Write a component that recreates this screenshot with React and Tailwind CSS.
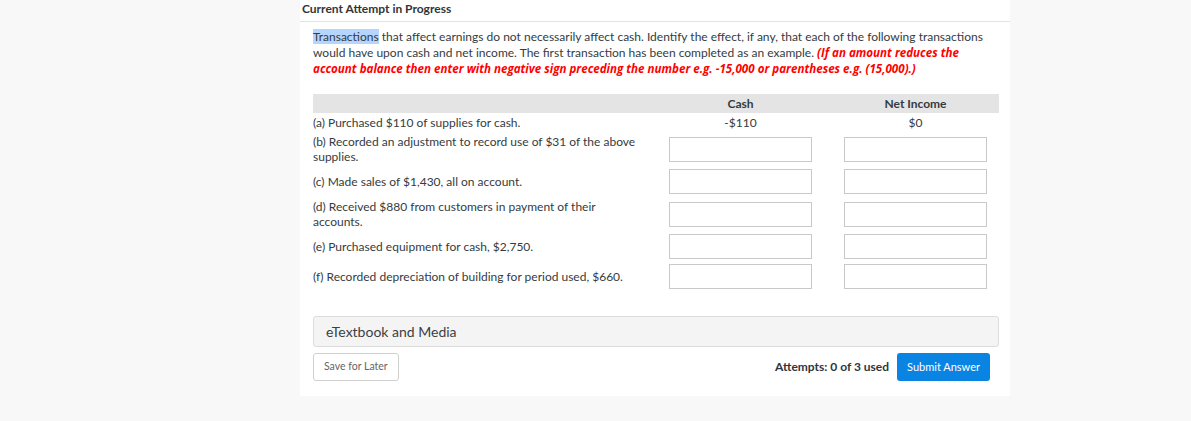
import React from "react"

const rows = [
    { label: "(b) Recorded an adjustment to record use of $31 of the above supplies." },
    { label: "(c) Made sales of $1,430, all on account." },
    { label: "(d) Received $880 from customers in payment of their accounts." },
    { label: "(e) Purchased equipment for cash, $2,750." },
    { label: "(f) Recorded depreciation of building for period used, $660." },
]

function AnswerInput() {
    return <input type="text" className="block w-[143px] h-[25px] border border-[#c9c9c9] bg-white outline-none" />
}

export default function App() {
    return (
        <div className="min-h-[421px] w-full bg-[#f8f8f8] font-['Lato','Liberation_Sans',sans-serif] text-[#353b41]">
            <div className="ml-[300px] w-[710px] bg-white pb-[15px]">
                <div className="h-[22px] border-b border-[#e3e3e3] pl-[2px] pt-[1px] text-[12px] font-bold leading-[16px] text-[#2f353b]">
                    Current Attempt in Progress
                </div>
                <div className="px-[13px]">
                    <p className="mt-[7px] w-[670px] text-[12px] leading-[16px]">
                        <span className="bg-[#b4d5fd]">Transactions</span> that affect earnings do not necessarily affect cash. Identify the effect, if any, that each of the following transactions would have upon cash and net income. The first transaction has been completed as an example.{" "}
                        <span className="font-['Open_Sans',sans-serif] text-[11.6px] font-bold italic text-[#ff0000]">
                            (If an amount reduces the account balance then enter with negative sign preceding the number e.g. -15,000 or parentheses e.g. (15,000).)
                        </span>
                    </p>

                    <div className="mt-[17px] w-[686px]">
                        <div className="flex h-[19px] items-center bg-[#e4e4e4] text-[12px] font-bold">
                            <div className="w-[342px]" />
                            <div className="w-[171px] pl-[14px]">
                                <div className="w-[143px] text-center">Cash</div>
                            </div>
                            <div className="w-[173px] pl-[18px]">
                                <div className="w-[143px] text-center">Net Income</div>
                            </div>
                        </div>

                        <div className="mt-[2px] flex h-[16px] items-center text-[12px] leading-[16px]">
                            <div className="w-[342px]">(a) Purchased $110 of supplies for cash.</div>
                            <div className="w-[171px] pl-[14px]">
                                <div className="w-[143px] text-center">-$110</div>
                            </div>
                            <div className="w-[173px] pl-[18px]">
                                <div className="w-[143px] text-center">$0</div>
                            </div>
                        </div>

                        <div className="mt-[3px] flex flex-col gap-[5px]">
                            {rows.map((row) => (
                                <div key={row.label} className="flex min-h-[25px] items-center text-[12px] leading-[15px]">
                                    <div className="w-[342px] pr-[12px]">{row.label}</div>
                                    <div className="w-[171px] pl-[14px]">
                                        <AnswerInput />
                                    </div>
                                    <div className="w-[173px] pl-[18px]">
                                        <AnswerInput />
                                    </div>
                                </div>
                            ))}
                        </div>
                    </div>

                    <div className="mt-[27px] flex h-[31px] w-[686px] items-center rounded-[3px] border border-[#dcdcdc] bg-[#f4f4f4] pl-[12px] text-[14px] text-[#3a3f44]">
                        eTextbook and Media
                    </div>

                    <div className="mt-[6px] flex w-[677px] items-center">
                        <button className="h-[28px] rounded-[3px] border border-[#d0d0d0] bg-white px-[10px] text-[10.5px] text-[#666]">
                            Save for Later
                        </button>
                        <div className="ml-auto text-[12px] font-bold text-[#2f353b]">Attempts: 0 of 3 used</div>
                        <button className="ml-[8px] h-[28px] rounded-[3px] bg-[#0a84e3] px-[10px] text-[11px] text-white">
                            Submit Answer
                        </button>
                    </div>
                </div>
            </div>
        </div>
    )
}
